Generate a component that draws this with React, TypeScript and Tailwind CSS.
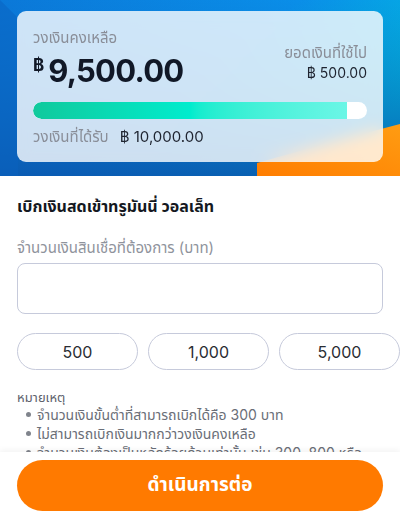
import React from "react";

const amounts = ["500", "1,000", "5,000"];

const notes = [
  "จำนวนเงินขั้นต่ำที่สามารถเบิกได้คือ 300 บาท",
  "ไม่สามารถเบิกเงินมากกว่าวงเงินคงเหลือ",
  "จำนวนเงินต้องเป็นหลักร้อยถ้วนเท่านั้น เช่น 300, 800 หรือ",
];

function HeaderBackdrop() {
  return (
    <svg className="absolute inset-0 h-full w-full" viewBox="0 0 400 176" preserveAspectRatio="none">
      <defs>
        <linearGradient id="blue" x1="0" y1="0" x2="1" y2="0.6">
          <stop offset="0" stopColor="#0b78d8" />
          <stop offset="0.55" stopColor="#0a8ee8" />
          <stop offset="1" stopColor="#00c4e0" />
        </linearGradient>
        <linearGradient id="shade" x1="0" y1="0" x2="0" y2="1">
          <stop offset="0" stopColor="#0b5fb8" stopOpacity="0" />
          <stop offset="1" stopColor="#0a56ad" stopOpacity="0.9" />
        </linearGradient>
        <linearGradient id="orange" x1="0" y1="1" x2="1" y2="0">
          <stop offset="0" stopColor="#ff7d00" />
          <stop offset="1" stopColor="#ff9c12" />
        </linearGradient>
      </defs>
      <rect width="400" height="176" fill="url(#blue)" />
      <rect width="400" height="176" fill="url(#shade)" />
      <path d="M0 0 L18 18 L18 176 L0 176 Z" fill="#0a62bf" opacity="0.5" />
      <path d="M257 176 L257 163 Q320 145 400 124 L400 176 Z" fill="url(#orange)" />
    </svg>
  );
}

export default function App() {
  return (
    <div
      className="flex h-[520px] w-[400px] flex-col overflow-hidden bg-white"
      style={{ fontFamily: 'Inter, "Noto Sans", "Noto Sans Thai", "DejaVu Sans", sans-serif' }}
    >
      <div className="relative h-[176px] shrink-0 px-[17px] pt-[11px]">
        <HeaderBackdrop />
        <div className="relative h-[151px] rounded-[9px] bg-white/80 px-4 pt-[17px] backdrop-blur-sm">
          <div className="flex items-start justify-between">
            <div>
              <div className="text-[15px] leading-5 text-[#8a8e98]">วงเงินคงเหลือ</div>
              <div className="mt-[5px] flex items-start">
                <span className="mt-[2px] text-[17px] font-bold leading-5 text-[#111827]">฿</span>
                <span className="ml-[4px] text-[31px] font-bold leading-9 tracking-tight text-[#111827]">9,500.00</span>
              </div>
            </div>
            <div className="pt-[15px] text-right">
              <div className="text-[15px] leading-5 text-[#8a8e98]">ยอดเงินที่ใช้ไป</div>
              <div className="text-[14px] leading-5 text-[#1f2430]">฿ 500.00</div>
            </div>
          </div>
          <div className="mt-[13px] h-[17px] w-full overflow-hidden rounded-full bg-white">
            <div
              className="h-full rounded-l-full bg-gradient-to-r from-[#10c99c] via-[#00eccd] to-[#6af6e6]"
              style={{ width: "94%" }}
            />
          </div>
          <div className="mt-[8px] flex items-center gap-[11px] text-[15px] leading-5">
            <span className="text-[#8a8e98]">วงเงินที่ได้รับ</span>
            <span className="text-[#1f2430]">฿ 10,000.00</span>
          </div>
        </div>
      </div>

      <div className="min-h-0 flex-1 overflow-hidden px-[17px] pt-[18px]">
        <div className="text-[16px] font-bold leading-6 text-[#141821]">เบิกเงินสดเข้าทรูมันนี่ วอลเล็ท</div>
        <div className="mt-[20px] text-[15px] leading-5 text-[#8f939c]">จำนวนเงินสินเชื่อที่ต้องการ (บาท)</div>
        <div className="mt-[5px] h-[51px] rounded-[8px] border border-[#c6cadb]" />
        <div className="mt-[19px] flex gap-[10px]">
          {amounts.map((a) => (
            <div
              key={a}
              className="flex h-[37px] w-[121px] shrink-0 items-center justify-center rounded-full border border-[#c6cadb] text-[16px] text-[#2a2d33]"
            >
              {a}
            </div>
          ))}
        </div>
        <div className="mt-[19px] text-[13px] leading-[16px] text-[#5d616b]">หมายเหตุ</div>
        <ul className="pl-[9px]">
          {notes.map((n) => (
            <li key={n} className="flex h-[19px] items-center gap-[6px] whitespace-nowrap text-[14px] text-[#6a6e77]">
              <span className="h-[5px] w-[5px] shrink-0 rounded-full bg-[#80848c]" />
              <span className="leading-[19px]">{n}</span>
            </li>
          ))}
        </ul>
      </div>

      <div className="relative shrink-0 bg-white px-[17px] pb-[9px] pt-[8px] shadow-[0_-2px_6px_rgba(0,0,0,0.05)]">
        <button
          type="button"
          className="flex h-[51px] w-full items-center justify-center rounded-full bg-[#ff7a00] text-[19px] font-bold text-white"
        >
          ดำเนินการต่อ
        </button>
      </div>
    </div>
  );
}
